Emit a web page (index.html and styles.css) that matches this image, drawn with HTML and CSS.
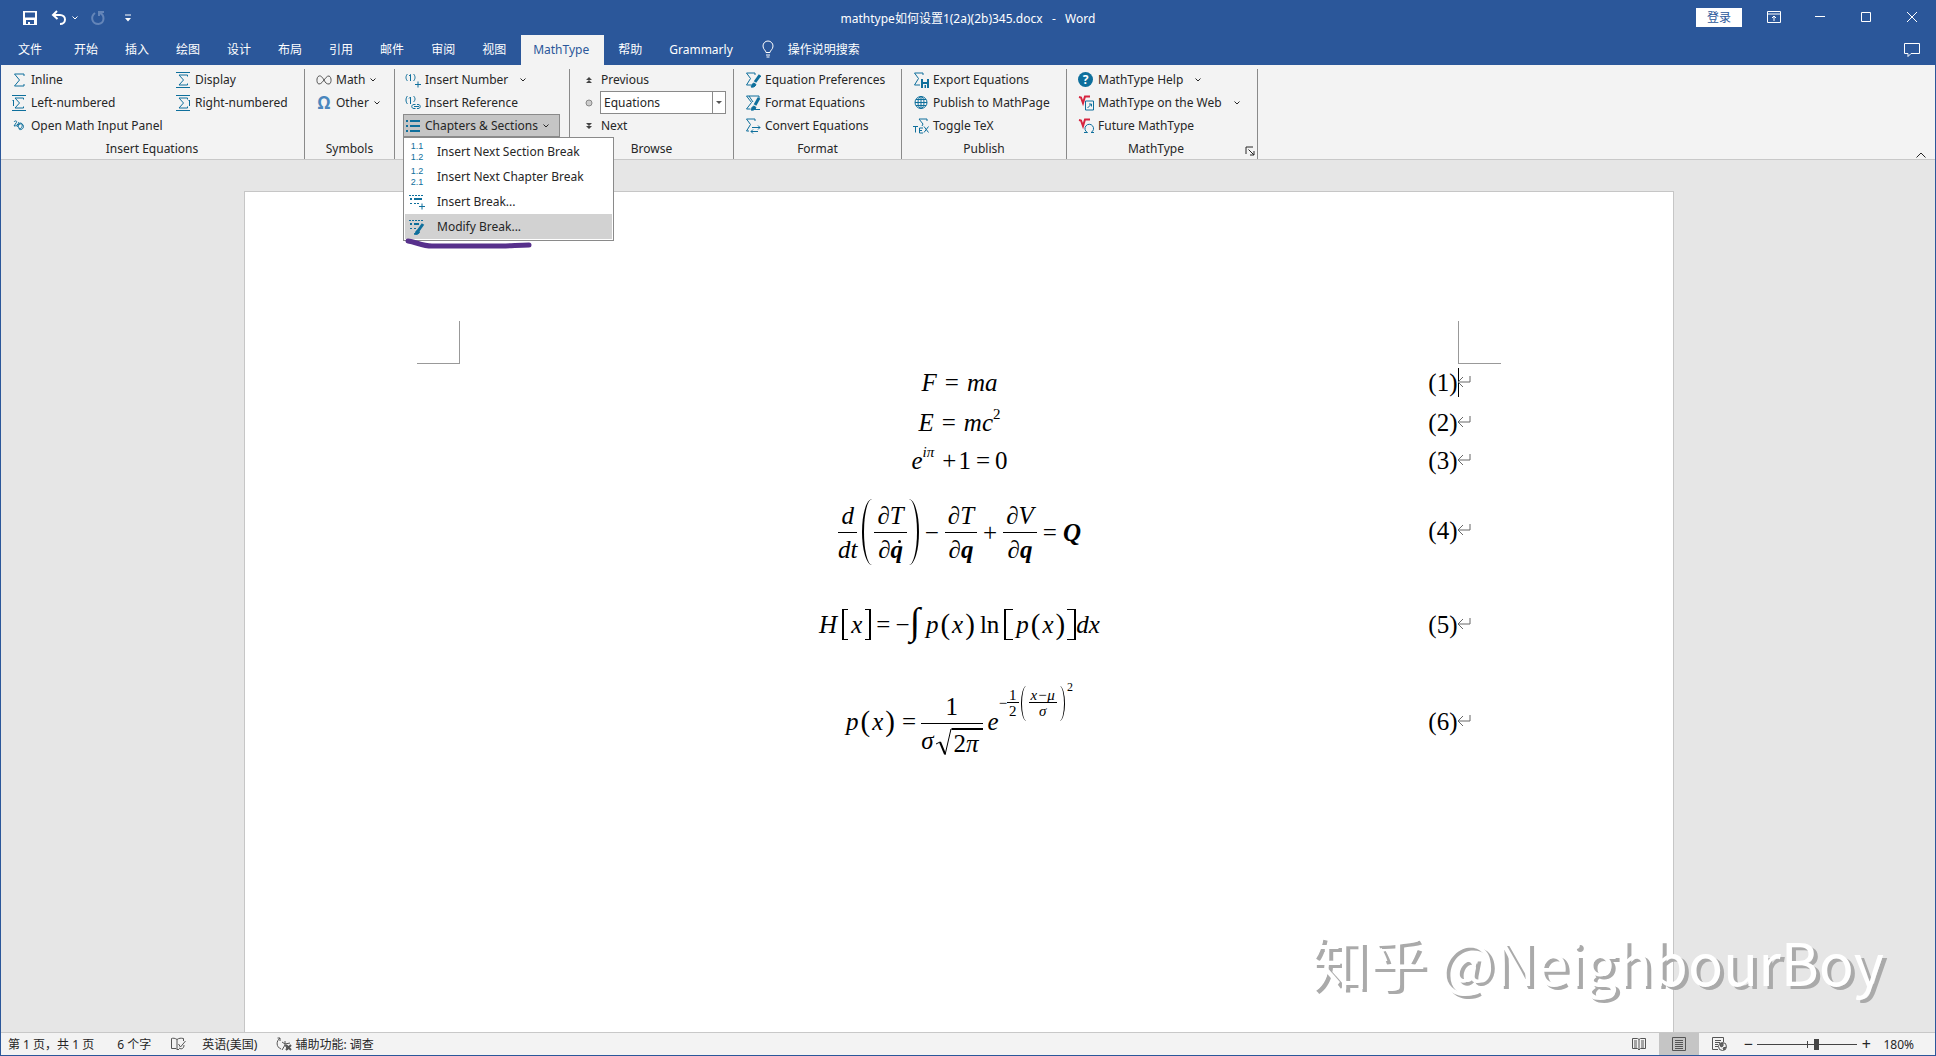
FILE: index.html
```html
<!DOCTYPE html>
<html lang="zh-CN">
<head>
    <meta charset="UTF-8">
    <meta name="viewport" content="width=device-width, initial-scale=1.0">
    <title>mathtype如何设置1(2a)(2b)345.docx - Word</title>
    <link rel="stylesheet" href="styles.css">
</head>
<body>
    <svg class="defs" aria-hidden="true">
        <symbol id="sigma" viewBox="0 0 16 16"><path d="M13 4V2H3.500l5 6-5 6H13v-2"/></symbol>
        <symbol id="sigma-bars" viewBox="0 0 16 16"><path d="M1 .5h14M1 15.500h14M12.500 4.500V3H4l4.500 5L4 13h8.500v-1.500"/></symbol>
        <symbol id="chevron" viewBox="0 0 8 8"><path d="M1.500 2.500L4 5l2.500-2.500"/></symbol>
        <symbol id="return" viewBox="0 0 16 16"><path d="M14 2v6H2M7 3L2 8l5 5"/></symbol>
    </svg>

    <header class="titlebar">
        <div class="quick">
            <button class="qbtn" aria-label="保存"><svg width="16" height="16" viewBox="0 0 16 16"><path fill="#fff" stroke="none" fill-rule="evenodd" d="M1 1h14v14H1zM3 2.500v5h10v-5zM4 10v4h2v-2h2v2h4v-4z"/></svg></button>
            <button class="qbtn" aria-label="撤消"><svg width="16" height="16" viewBox="0 0 16 16"><path class="thick" d="M6 1L2 5l4.500 4M2.500 5H9c3 0 5 2 5 4.500S12 14 9 14"/></svg></button>
            <button class="qarrow" aria-label="撤消选项"><svg width="8" height="8"><use href="#chevron"/></svg></button>
            <button class="qbtn dim" aria-label="重复"><svg width="16" height="16" viewBox="0 0 16 16"><path class="thick" d="M9 6V2h5M9.500 2.500C15 5 15 13 8.500 14 2 14 0 7 5 3"/></svg></button>
            <button class="qbtn last" aria-label="自定义"><svg width="8" height="10" viewBox="0 0 8 10"><path d="M1 2h6"/><path fill="#fff" stroke="none" d="M1 5h6L4 8.500z"/></svg></button>
        </div>
        <div class="doc-title">mathtype如何设置1(2a)(2b)345.docx&nbsp;&nbsp; - &nbsp;&nbsp;Word</div>
        <div class="window-buttons">
            <button class="login">登录</button>
            <button class="win" aria-label="功能区显示选项"><svg width="14" height="12" viewBox="0 0 14 12"><path d="M.5.500h13v11H.5zM.5 3h13M7 10V5M5 7l2-2 2 2"/></svg></button>
            <button class="win" aria-label="最小化"><svg width="12" height="12" viewBox="0 0 12 12"><path d="M1 5.500h10"/></svg></button>
            <button class="win" aria-label="最大化"><svg width="12" height="12" viewBox="0 0 12 12"><path d="M1.500 1.500h9v9h-9z"/></svg></button>
            <button class="win" aria-label="关闭"><svg width="12" height="12" viewBox="0 0 12 12"><path d="M1 1l10 10M11 1L1 11"/></svg></button>
        </div>
    </header>

    <nav class="tabs">
        <button class="tab file">文件</button>
        <button class="tab">开始</button>
        <button class="tab">插入</button>
        <button class="tab">绘图</button>
        <button class="tab">设计</button>
        <button class="tab">布局</button>
        <button class="tab">引用</button>
        <button class="tab">邮件</button>
        <button class="tab">审阅</button>
        <button class="tab">视图</button>
        <button class="tab active">MathType</button>
        <button class="tab">帮助</button>
        <button class="tab">Grammarly</button>
        <button class="tell-me"><svg width="14" height="18" viewBox="0 0 14 18"><path d="M5 12.500c0-2-3-3-3-6.500a5 5 0 0 1 10 0c0 3.500-3 4.500-3 6.500zM5 15h4M5.500 17h3"/></svg>操作说明搜索</button>
        <button class="comments" aria-label="批注"><svg width="16" height="16" viewBox="0 0 16 16"><path d="M.5 1.500h15v10H7l-3 3v-3H.5z"/></svg></button>
    </nav>

    <section class="ribbon">
        <div class="group">
            <div class="rows two">
                <button class="cmd"><svg class="ico"><use href="#sigma"/></svg>Inline</button>
                <button class="cmd"><svg class="ico"><use href="#sigma-bars"/></svg>Display</button>
                <button class="cmd"><svg class="ico" viewBox="0 0 16 16"><use href="#sigma-bars"/><path d="M2.500 5v6M1.500 6l1-1"/></svg>Left-numbered</button>
                <button class="cmd"><svg class="ico" viewBox="0 0 16 16"><use href="#sigma-bars"/><path d="M14.500 5v6M13.500 6l1-1"/></svg>Right-numbered</button>
                <button class="cmd"><svg class="ico" viewBox="0 0 16 16"><path class="pen" d="M3 4c1-2 4-1 2 1L3 8c2 0 4-1 5-4M6 9c2-4 4-5 5-3s-1 6-3 4 1-5 3-4 2 4 0 5-3 1-3-1"/></svg>Open Math Input Panel</button>
            </div>
            <div class="caption"><span>Insert Equations</span></div>
        </div>

        <div class="group">
            <div class="rows">
                <button class="cmd"><svg class="ico grey" viewBox="0 0 16 16"><path d="M8 8C6 4.500 4.500 3.500 3 4c-3 1-2.500 8 0 8s4-3 5-4 3-4.500 5-4c3 1 2.500 8 0 8S9.500 11 8 8"/></svg>Math<svg class="chev"><use href="#chevron"/></svg></button>
                <button class="cmd"><span class="omega">Ω</span>Other<svg class="chev"><use href="#chevron"/></svg></button>
            </div>
            <div class="caption"><span>Symbols</span></div>
        </div>

        <div class="group">
            <div class="rows">
                <button class="cmd"><svg class="ico" viewBox="0 0 16 16"><path d="M2.500 2C.5 4 .5 7 2.500 9M8.500 2c2 2 2 5 0 7M5.500 2.500V9M4 4l1.500-1.500M10 12.500h6M13 9.500v6"/></svg>Insert Number<svg class="chev far"><use href="#chevron"/></svg></button>
                <button class="cmd"><svg class="ico" viewBox="0 0 16 16"><path d="M2.500 1C.5 3 .5 7 2.500 9M8.500 1c2 2 2 4 0 6M5.500 2v7M4 3.500L5.500 2M10.500 9.500H9c-3 0-3 4 0 4h1.500M12 9.500h1c3 0 3 4 0 4h-1M9 11.500h5"/></svg>Insert Reference</button>
                <div class="dropdown">
                    <button class="cmd open"><svg class="ico" viewBox="0 0 16 16"><path class="bold" d="M1 3h2M5 3h10M1 8h2M5 8h10M1 13h2M5 13h10"/></svg>Chapters &amp; Sections<svg class="chev"><use href="#chevron"/></svg></button>
                    <div class="menu">
                        <button class="item"><span class="nums"><span>1.1</span><span>1.2</span></span>Insert Next Section Break</button>
                        <button class="item"><span class="nums"><span>1.2</span><span>2.1</span></span>Insert Next Chapter Break</button>
                        <button class="item"><svg class="ico" viewBox="0 0 16 16"><path class="bold" d="M1 5h2M5 5h8"/><path stroke-dasharray="2 1" d="M0 1.500h14"/><path d="M1 9.500h2M5 9.500h2M8 9.500h2M10 12.500h6M13 9.500v6"/></svg>Insert Break...</button>
                        <button class="item current"><svg class="ico" viewBox="0 0 16 16"><path class="bold" d="M1 5h2M5 5h5"/><path stroke-dasharray="2 1" d="M0 1.500h14"/><path d="M1 9.500h2M5 9.500h2"/><path class="brush" d="M14 5l-5 7"/><path fill="#0e6f9c" d="M5 15c2 0 1-3 3.500-4l2 2C10 15 8 16 5 15z"/></svg>Modify Break...</button>
                        <svg class="stroke" width="128" height="12" viewBox="0 0 128 12"><path d="M4 1C12 2 18 6 28 6h70c10 0 16-1 27-1"/></svg>
                    </div>
                </div>
            </div>
            <div class="caption"></div>
        </div>

        <div class="group">
            <div class="rows browse">
                <button class="cmd"><svg class="mini" viewBox="0 0 8 8"><path d="M1 4l3-3 3 3zM1 7l3-3 3 3z"/></svg>Previous</button>
                <div class="pick">
                    <svg class="mini dot" viewBox="0 0 8 8"><circle cx="4" cy="4" r="3"/></svg>
                    <span class="select-box"><select aria-label="Browse">
                        <option>Equations</option>
                    </select></span>
                </div>
                <button class="cmd"><svg class="mini" viewBox="0 0 8 8"><path d="M1 1l3 3 3-3zM1 4l3 3 3-3z"/></svg>Next</button>
            </div>
            <div class="caption"><span>Browse</span></div>
        </div>

        <div class="group">
            <div class="rows">
                <button class="cmd"><svg class="ico" viewBox="0 0 16 16"><path d="M10 3V1H1.500l4 5.500L1.500 13H6"/><path class="brush" d="M15 3l-5 7"/><path fill="#0e6f9c" d="M6 15c1-1 0-3 3-4l2 1.500C10 15 8 15.500 6 15z"/></svg>Equation Preferences</button>
                <button class="cmd"><svg class="ico" viewBox="0 0 16 16"><path d="M14 4V1H1.500l5 6.500-5 6.500h4M4 1l4 6M10 14.500h5"/><path class="brush" d="M14 3l-4 7"/><path fill="#0e6f9c" d="M6 15c1-1 0-3 3-4l2 1.500C10 15 8 15.500 6 15z"/></svg>Format Equations</button>
                <button class="cmd"><svg class="ico" viewBox="0 0 16 16"><path d="M10 3V1H1.500l4 5.500L1.500 13H4M7 9.500h8M13 7.500l2 2-2 2M13 13.500H6M8 11.500l-2 2 2 2"/></svg>Convert Equations</button>
            </div>
            <div class="caption"><span>Format</span></div>
        </div>

        <div class="group">
            <div class="rows">
                <button class="cmd"><svg class="ico" viewBox="0 0 16 16"><path d="M10 3V1H1.500l4 5.500L1.500 13H7"/><path fill="#0e6f9c" stroke="none" fill-rule="evenodd" d="M8 7h8v9H8zM10 7v3h4V7zM10 12v4h1.500v-3H13v3h1v-4z"/></svg>Export Equations</button>
                <button class="cmd"><svg class="ico" viewBox="0 0 16 16"><circle cx="8" cy="7.500" r="6"/><ellipse cx="8" cy="7.500" rx="3" ry="6"/><path d="M2 7.500h12M8 1.500v12M3 4.500h10M3 10.500h10"/></svg>Publish to MathPage</button>
                <button class="cmd"><svg class="ico" viewBox="0 0 16 16"><path d="M14 3V1H6l4 5-1 2M0 8.500h5M2.500 8.500v6M10 10H6.500v5H10M6.500 12.500H9M11 8.500l4.500 6M15.500 8.500l-4.500 6"/></svg>Toggle TeX</button>
            </div>
            <div class="caption"><span>Publish</span></div>
        </div>

        <div class="group">
            <div class="rows">
                <button class="cmd"><span class="help">?</span>MathType Help<svg class="chev far"><use href="#chevron"/></svg></button>
                <button class="cmd"><svg class="ico" viewBox="0 0 16 16"><path class="red" d="M1 2l2 .5L5 8l2-6.500h5"/><path d="M7.500 6h8v9h-8zM9.500 13l4-4M11 9h2.500v2.500"/></svg>MathType on the Web<svg class="chev far"><use href="#chevron"/></svg></button>
                <button class="cmd"><svg class="ico" viewBox="0 0 16 16"><path class="red" d="M1 2l2 .5L5 8l2-6.500h5"/><path d="M6 14.500h3.500a4.300 4.300 0 1 1 3.500 0H16"/></svg>Future MathType</button>
            </div>
            <div class="caption"><span>MathType</span><button class="launcher" aria-label="MathType options"><svg width="10" height="10" viewBox="0 0 10 10"><path d="M1 8V1h7M3.500 3.500L9 9M9 5v4H5"/></svg></button></div>
        </div>

        <button class="collapse" aria-label="折叠功能区"><svg width="12" height="8" viewBox="0 0 12 8"><path d="M1.500 6.500L6 2l4.500 4.500"/></svg></button>
    </section>

    <main class="workspace">
        <article class="page">
            <div class="corners"><span class="corner left"></span><span class="corner right"></span></div>

            <div class="line">
                <div class="eq"><i>F</i><span class="op">=</span><i>ma</i></div>
                <div class="num"><span class="caret">(1)</span><svg class="ret"><use href="#return"/></svg></div>
            </div>
            <div class="line">
                <div class="eq"><i>E</i><span class="op">=</span><i>mc</i><sup>2</sup></div>
                <div class="num">(2)<svg class="ret"><use href="#return"/></svg></div>
            </div>
            <div class="line short">
                <div class="eq"><i>e</i><sup><i>iπ</i></sup><span class="op plus">+</span>1<span class="op tight">=</span>0</div>
                <div class="num">(3)<svg class="ret"><use href="#return"/></svg></div>
            </div>
            <div class="line lagrange">
                <div class="eq">
                    <span class="frac"><i>d</i><i>dt</i></span>
                    <span class="paren open"></span>
                    <span class="frac"><i>∂T</i><i>∂<b class="dotted">q</b></i></span>
                    <span class="paren close"></span>
                    <span class="op">−</span>
                    <span class="frac"><i>∂T</i><i>∂<b>q</b></i></span>
                    <span class="op">+</span>
                    <span class="frac"><i>∂V</i><i>∂<b>q</b></i></span>
                    <span class="op">=</span>
                    <i><b>Q</b></i>
                </div>
                <div class="num">(4)<svg class="ret"><use href="#return"/></svg></div>
            </div>
            <div class="line entropy">
                <div class="eq"><i>H</i><span class="bracket open"></span><i>x</i><span class="bracket close"></span><span class="op tight">=</span>−<span class="integral">∫</span><i>p</i><span class="big">(</span><i>x</i><span class="big">)</span><span class="ln">ln</span><span class="bracket open wide"></span><i>p</i><span class="big">(</span><i>x</i><span class="big">)</span><span class="bracket close wide"></span><i>dx</i></div>
                <div class="num">(5)<svg class="ret"><use href="#return"/></svg></div>
            </div>
            <div class="line gauss">
                <div class="eq">
                    <i>p</i><span class="big">(</span><i>x</i><span class="big">)</span><span class="op tight">=</span>
                    <span class="frac"><span>1</span><span class="den"><i>σ</i><svg width="16" height="28" viewBox="0 0 16 28"><path d="M0 16l4-2"/><path class="thick" d="M4 14l5 12"/><path d="M9 27l6-26h1"/></svg><span class="root">2<i>π</i></span></span></span>
                    <i class="e">e</i>
                    <span class="power">−<span class="frac"><span>1</span><span>2</span></span><span class="paren open"></span><span class="frac"><i>x−μ</i><i>σ</i></span><span class="paren close"></span><span class="sq">2</span></span>
                </div>
                <div class="num">(6)<svg class="ret"><use href="#return"/></svg></div>
            </div>
        </article>
        <div class="watermark">知乎 @NeighbourBoy</div>
    </main>

    <footer class="status">
        <span class="pages">第 1 页，共 1 页</span>
        <span class="words">6 个字</span>
        <svg class="proof" width="16" height="14" viewBox="0 0 16 14"><path d="M7 12.500V2.500C5 1 3 1 1.500 1.500v10H6l1 1h2M7 2.500C9 1 11 1 13.500 1.500V4M8.500 7l2 3 5-6M9 11c3 2 5 0 5-3"/></svg>
        <span class="lang">英语(美国)</span>
        <svg width="16" height="16" viewBox="0 0 16 16"><path d="M4 2C0 5 0 11 5 13M4 2v3M4 2H1.500M9 5v4M6 6l3 2 5-1M9 9l-3 5M9 9l3 5"/><path class="bold" d="M10 9l5 5M15 9l-5 5"/></svg>
        <span class="access">辅助功能: 调查</span>
        <div class="views">
            <button class="view" aria-label="阅读视图"><svg width="14" height="14" viewBox="0 0 14 14"><path d="M7 2.500L5.500 1.500h-5v10h5L7 13l1.500-1.500h5v-10h-5zM7 2.500V13M2 4h3M2 6h3M2 8h3M2 10h3M9 4h3M9 6h3M9 8h3M9 10h3"/></svg></button>
            <button class="view on" aria-label="页面视图"><svg width="14" height="14" viewBox="0 0 14 14"><path d="M.5.500h13v13H.5zM3 3.500h8M3 5.500h8M3 7.500h8M3 9.500h8M3 11.500h8"/></svg></button>
            <button class="view" aria-label="Web 版式"><svg width="15" height="14" viewBox="0 0 15 14"><path d="M6 12.500H.5v-12h11V5M3 3.500h6M3 5.500h5M3 7.500h3M3 9.500h3"/><circle cx="10.500" cy="9.500" r="4"/><path fill="#666" d="M8 7l3-1v3l-2 1zM11 11l3-1-2 3z"/></svg></button>
        </div>
        <button class="step" aria-label="缩小">−</button>
        <input class="zoom" type="range" min="0" max="100" value="60" aria-label="缩放">
        <button class="step" aria-label="放大">+</button>
        <span class="percent">180%</span>
    </footer>
</body>
</html>
```
FILE: styles.css
```css
* {
    box-sizing: border-box;
}
body {
    margin: 0;
    height: 100vh;
    display: flex;
    flex-direction: column;
    border: 1px solid #2b579a;
    border-top: none;
    font-family: "Noto Sans", "Noto Sans CJK SC", sans-serif;
    font-size: 12px;
    color: #262626;
    background-color: #e6e6e6;
}
button {
    padding: 0;
    border: none;
    background: none;
    font: inherit;
    color: inherit;
    white-space: nowrap;
}
svg {
    flex: none;
    fill: none;
    stroke: currentColor;
}
.defs {
    position: absolute;
    width: 0;
    height: 0;
}
.thick {
    stroke-width: 2;
}

/* title bar */
.titlebar {
    display: grid;
    grid-template-columns: 1fr auto 1fr;
    align-items: center;
    height: 35px;
    background-color: #2b579a;
    color: #fff;
}
.quick {
    display: flex;
    align-items: center;
    padding-left: 21px;
}
.quick button {
    display: flex;
}
.qbtn {
    margin-right: 13px;
}
.qarrow {
    margin: 0 11px 0 -9px;
}
.qbtn.dim {
    color: #6485b8;
}
.qbtn.last {
    margin-left: 5px;
}
.window-buttons {
    display: flex;
    justify-content: flex-end;
    align-items: center;
}
.login {
    width: 46px;
    height: 19px;
    margin-right: 9px;
    background-color: #fff;
    color: #2b579a;
    line-height: 19px;
}
.win {
    display: flex;
    justify-content: center;
    width: 46px;
    padding-bottom: 2px;
}

/* tabs */
.tabs {
    display: flex;
    height: 30px;
    background-color: #2b579a;
    color: #fff;
}
.tab {
    padding: 0 13px 2px 14px;
}
.tab.file {
    padding: 0 18px 2px 17px;
}
.tab.active {
    margin-left: 2px;
    padding: 0 15px 2px 12px;
    background-color: #f3f3f3;
    color: #2b579a;
}
.tell-me {
    display: flex;
    align-items: center;
    gap: 13px;
    margin-left: 15px;
    padding-bottom: 2px;
}
.comments {
    display: flex;
    align-items: center;
    margin: 0 15px 0 auto;
}

/* ribbon */
.ribbon {
    display: grid;
    grid-template-columns: 304px 90px 175px 164px 168px 165px 191px 1fr;
    flex: none;
    height: 95px;
    padding: 4px 0;
    background-color: #f3f3f3;
    border-bottom: 1px solid #c8c8c8;
}
.group {
    border-right: 1px solid #8a8a8a;
    padding-left: 11px;
}
.group:first-child {
    padding-left: 10px;
}
.group:nth-child(3) {
    padding-left: 8px;
}
.rows {
    display: grid;
    grid-auto-rows: 23px;
    justify-items: start;
    height: 69px;
    margin-top: -1px;
}
.rows.two {
    grid-template-columns: 164px 1fr;
}
.cmd {
    display: flex;
    align-items: center;
    gap: 4px;
    height: 23px;
}
.ico {
    width: 16px;
    height: 16px;
    color: #0e6f9c;
}
.ico.grey {
    color: #555;
}
.bold {
    stroke-width: 2;
}
.brush {
    stroke-width: 3;
}
.red {
    stroke: #d6243f;
    stroke-width: 2;
}
.chev {
    width: 8px;
    height: 8px;
}
.chev.far {
    margin-left: 7px;
}
.omega {
    width: 16px;
    font-size: 17px;
    font-weight: bold;
    line-height: 20px;
    color: #4a86bd;
}
.help {
    width: 15px;
    height: 15px;
    margin-right: 1px;
    border-radius: 50%;
    background-color: #0e6f9c;
    color: #fff;
    font-weight: bold;
    line-height: 15px;
}
.caption {
    display: flex;
    align-items: center;
    justify-content: center;
    height: 22px;
    margin-left: -11px;
}
.launcher {
    display: flex;
    margin: 6px 2px 0 auto;
}
.caption span:not(:last-child) {
    margin-left: auto;
}
.collapse {
    display: flex;
    align-self: end;
    justify-self: end;
    margin-right: 8px;
}

/* chapters menu */
.group .dropdown {
    position: relative;
}
.cmd.open {
    padding: 0 10px 0 2px;
    background-color: #c5c5c5;
    outline: 1px solid #8a8a8a;
    outline-offset: -1px;
}
.group:nth-child(3) .cmd:not(.open) {
    padding-left: 2px;
}
.menu {
    position: absolute;
    top: 23px;
    left: 0;
    z-index: 1;
    width: 211px;
    padding: 1px;
    border: 1px solid #8a8a8a;
    background-color: #fff;
}
.item {
    display: flex;
    align-items: center;
    gap: 12px;
    width: 100%;
    height: 25px;
    padding-left: 4px;
}
.item.current {
    background-color: #d2d2d2;
}
.nums {
    display: grid;
    gap: 1px;
    width: 16px;
    font-family: "Liberation Sans", sans-serif;
    font-size: 9px;
    line-height: 10px;
    color: #0e6f9c;
}
.stroke {
    position: absolute;
    top: 100%;
    left: 0;
    color: #57308c;
    stroke-width: 5;
    stroke-linecap: round;
    overflow: visible;
}

/* browse */
.mini {
    width: 8px;
    height: 8px;
    margin-right: 4px;
    fill: #444;
    stroke: none;
}
.mini.dot {
    fill: #ccc;
    stroke: #888;
}
.group .browse {
    padding-left: 4px;
}
.pick {
    display: flex;
    align-items: center;
    gap: 3px;
}
.select-box {
    display: flex;
    position: relative;
}
.select-box::after {
    content: "";
    position: absolute;
    right: 4px;
    top: 10px;
    border: 3px solid transparent;
    border-top-color: #555;
}
.select-box select {
    appearance: none;
    width: 126px;
    height: 23px;
    padding: 0 3px;
    border: 1px solid #8a8a8a;
    border-radius: 0;
    background: linear-gradient(#8a8a8a, #8a8a8a) right 12px top / 1px 100% no-repeat #fff;
    font: inherit;
    color: inherit;
}

/* document */
.workspace {
    position: relative;
    display: flex;
    justify-content: center;
    flex: 1;
    min-height: 0;
    padding: 31px 19px 0 0;
    overflow: hidden;
}
.page {
    width: 1430px;
    padding: 129px 214px 0;
    border: 1px solid #c6c6c6;
    border-bottom: none;
    background-color: #fff;
    color: #000;
    font-family: "Liberation Serif", serif;
    font-size: 25px;
    line-height: 25px;
}
.corners {
    display: flex;
    justify-content: space-between;
    margin: 0 -42px;
}
.corner {
    width: 43px;
    height: 43px;
    border-bottom: 1px solid #999;
}
.corner.left {
    border-right: 1px solid #999;
}
.corner.right {
    border-left: 1px solid #999;
}
.line {
    display: grid;
    grid-template-columns: 1fr auto 1fr;
    align-items: center;
    height: 40px;
    padding-bottom: 4px;
}
.line.short {
    height: 36px;
}
.line.lagrange {
    height: 104px;
}
.line.entropy {
    height: 84px;
}
.line.gauss {
    height: 110px;
}
.eq {
    grid-column: 2;
    display: flex;
    align-items: center;
    padding-left: 2px;
}
.op {
    margin: 0 8px;
}
.op.tight {
    margin: 0 5px;
}
.op.plus {
    margin: 0 2px 0 8px;
}
sup {
    align-self: flex-start;
    margin-top: -5px;
    font-size: 15px;
    line-height: 18px;
    vertical-align: baseline;
}
.num {
    display: flex;
    align-items: center;
    justify-content: flex-end;
    padding-right: 1px;
}
.caret {
    margin-right: -1px;
    border-right: 1px solid #000;
    line-height: 29px;
}
.ret {
    width: 16px;
    height: 16px;
    margin: 0 -14px 0 -2px;
    color: #666;
}
.frac {
    display: flex;
    flex-direction: column;
    align-items: center;
}
.frac > :first-child {
    align-self: stretch;
    padding: 0 3px 4px;
    border-bottom: 1px solid #000;
    text-align: center;
}
.frac > :last-child {
    padding-top: 4px;
}
.dotted {
    position: relative;
}
.dotted::after {
    content: "";
    position: absolute;
    top: 4px;
    left: 7px;
    width: 3px;
    height: 3px;
    border-radius: 50%;
    background-color: #000;
}
.paren {
    width: 10px;
    height: 66px;
    margin: 0 2px 0 5px;
    border-left: 2px solid #000;
    border-radius: 10px 0 0 10px / 33px 0 0 33px;
}
.paren.close {
    margin: 0 0 0 2px;
    border-left: none;
    border-right: 2px solid #000;
    border-radius: 0 10px 10px 0 / 0 33px 33px 0;
}
.lagrange .eq {
    padding-top: 4px;
}
.lagrange .op {
    margin: 0 6px;
}
.bracket {
    width: 6px;
    height: 31px;
    margin: 0 3px 0 5px;
    border: 1px solid #000;
    border-left-width: 2px;
    border-right: none;
}
.bracket.close {
    margin: 0 0 0 3px;
    border-left: none;
    border-right: 2px solid #000;
}
.bracket.wide {
    width: 9px;
}
.bracket.close.wide {
    margin-left: 0;
}
.big {
    margin: 0 2px;
    font-size: 29px;
}
.integral {
    margin: 0 6px 0 0;
    padding-bottom: 6px;
    font-size: 38px;
    line-height: 38px;
}
.ln {
    margin-left: 3px;
}
.den {
    display: flex;
    align-items: flex-start;
}
.root {
    padding: 1px 4px 0 1px;
    border-top: 2px solid #000;
}
.den svg {
    margin-left: 3px;
}
.gauss .eq > .frac {
    margin-top: 8px;
}
.e {
    margin-left: 5px;
}
.power {
    display: flex;
    align-items: center;
    margin-bottom: 36px;
    font-size: 15px;
    line-height: 13px;
}
.power .frac > * {
    padding: 0 2px;
}
.power .frac > :last-child {
    padding-top: 2px;
}
.power .paren {
    width: 6px;
    height: 35px;
    margin: 0 2px;
    border-width: 0 0 0 1px;
}
.power .paren.close {
    border-width: 0 1px 0 0;
}
.sq {
    margin-bottom: 32px;
    font-size: 12px;
}
.watermark {
    position: absolute;
    right: 51px;
    bottom: 31px;
    color: #fff;
    font-family: "Noto Sans CJK SC", sans-serif;
    font-size: 58px;
    line-height: 80px;
    text-shadow: 4px 3px 0 #aaa;
}

/* status bar */
.status {
    display: flex;
    align-items: center;
    flex: none;
    height: 23px;
    padding-left: 7px;
    border-top: 1px solid #c8c8c8;
    background-color: #f3f3f3;
}
.status svg {
    color: #555;
}
.words {
    margin: 0 19px 0 23px;
}
.lang {
    margin: 0 19px 0 16px;
}
.access {
    margin-left: 3px;
}
.views {
    display: flex;
    align-self: stretch;
    margin-left: auto;
}
.view {
    display: flex;
    align-items: center;
    justify-content: center;
    width: 40px;
}
.view.on {
    background-color: #c5c5c5;
}
.step {
    width: 18px;
    font-size: 16px;
    line-height: 20px;
}
.zoom {
    appearance: none;
    width: 100px;
    height: 11px;
    margin: 0;
    background:
        linear-gradient(#444, #444) center / 100% 1px no-repeat,
        linear-gradient(#444, #444) center / 1px 7px no-repeat;
}
.zoom::-webkit-slider-thumb {
    appearance: none;
    width: 5px;
    height: 11px;
    background-color: #444;
}
.percent {
    margin: 0 21px 0 8px;
}
```
